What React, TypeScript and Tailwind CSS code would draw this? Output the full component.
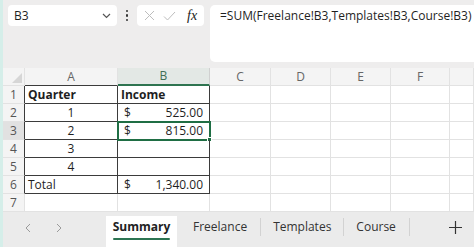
import React from 'react';

const cols = ['A', 'B', 'C', 'D', 'E', 'F', ''];
const colW = ['w-[93px]', 'w-[92px]', 'w-[61px]', 'w-[60px]', 'w-[60px]', 'w-[59px]', 'flex-1'];

type Row = { a?: string; b?: string; bold?: boolean; center?: boolean; money?: boolean };

const rows: Row[] = [
    { a: 'Quarter', b: 'Income', bold: true },
    { a: '1', b: '525.00', center: true, money: true },
    { a: '2', b: '815.00', center: true, money: true },
    { a: '3', center: true },
    { a: '4', center: true },
    { a: 'Total', b: '1,340.00', money: true },
    {},
];

const Cell: React.FC<{ w: string; dark?: boolean; children?: React.ReactNode; className?: string }> = ({ w, dark, children, className }) => (
    <div
        className={`${w} h-full shrink-0 border-r border-b flex items-center ${dark ? 'border-[#3b3b3b]' : 'border-[#e2e2e2]'} ${className ?? ''}`}
    >
        {children}
    </div>
);

export default function App() {
    return (
        <div
            className="w-[474px] h-[247px] overflow-hidden bg-[#eeeded] border-l-[3px] border-[#d5eee9] text-[12px] text-[#1f1f1f] flex flex-col"
            style={{ fontFamily: '"Open Sans", "Noto Sans", sans-serif' }}
        >
            {/* formula bar */}
            <div className="h-[68px] shrink-0 flex items-start pt-[5px] pl-[5px]">
                <div className="w-[109px] h-[21px] bg-white rounded-[4px] flex items-center justify-between pl-[6px] pr-[6px]">
                    <span className="text-[12px]">B3</span>
                    <svg width="9" height="6" viewBox="0 0 9 6" fill="none" stroke="#555" strokeWidth="1.2">
                        <path d="M1 1l3.5 3.5L8 1" />
                    </svg>
                </div>
                <div className="w-[20px] h-[21px] flex flex-col items-center justify-center gap-[2px]">
                    <div className="w-[2.5px] h-[2.5px] rounded-full bg-[#333]" />
                    <div className="w-[2.5px] h-[2.5px] rounded-full bg-[#333]" />
                    <div className="w-[2.5px] h-[2.5px] rounded-full bg-[#333]" />
                </div>
                <div className="w-[67px] h-[21px] bg-white rounded-[4px] flex items-center pl-[7px] gap-[8px]">
                    <svg width="11" height="11" viewBox="0 0 11 11" fill="none" stroke="#bdbdbd" strokeWidth="1">
                        <path d="M1 1l9 9M10 1l-9 9" />
                    </svg>
                    <svg width="13" height="10" viewBox="0 0 13 10" fill="none" stroke="#bdbdbd" strokeWidth="1">
                        <path d="M1 5.5l3.5 3.5L12 1" />
                    </svg>
                    <span className="italic text-[14px] text-[#222] leading-none ml-[3px]" style={{ fontFamily: '"Liberation Serif", serif' }}>
                        fx
                    </span>
                </div>
                <div className="flex-1 h-[57px] bg-white rounded-l-[5px] ml-[6px] pl-[10px] pt-[2px]">
                    <span className="text-[12px] whitespace-nowrap">=SUM(Freelance!B3,Templates!B3,Course!B3)</span>
                </div>
            </div>

            {/* column headers */}
            <div className="h-[18px] shrink-0 flex bg-[#f4f4f4] text-[#666] text-[12px]">
                <div className="w-[22px] h-full shrink-0 border-r border-b border-[#e2e2e2] flex items-end justify-end pr-[2px] pb-[2px]">
                    <svg width="10" height="10" viewBox="0 0 10 10">
                        <path d="M10 0V10H0Z" fill="#d6d6d6" />
                    </svg>
                </div>
                {cols.map((c, i) => (
                    <div
                        key={i}
                        className={`${colW[i]} h-full shrink-0 border-r flex items-center justify-center ${
                            i === 1
                                ? 'bg-[#e3e8e5] text-[#3f6f55] border-b-2 border-b-[#2e7450] border-r-[#d0d0d0]'
                                : i === 0
                                ? 'border-b border-b-[#3b3b3b] border-r-[#e2e2e2]'
                                : 'border-b border-[#e2e2e2]'
                        }`}
                    >
                        {c}
                    </div>
                ))}
            </div>

            {/* grid rows */}
            <div className="flex-1 bg-white flex flex-col">
                {rows.map((r, ri) => {
                    const inTable = ri < 6;
                    const selected = ri === 2;
                    return (
                        <div key={ri} className="h-[18px] shrink-0 flex">
                            <div
                                className={`w-[22px] h-full shrink-0 border-r border-b flex items-center justify-center text-[#555] ${
                                    selected ? 'bg-[#e1e1e1] border-b-[#e2e2e2]' : 'bg-[#f4f4f4] border-b-[#e2e2e2]'
                                } ${inTable ? 'border-r-[#3b3b3b]' : 'border-r-[#e2e2e2]'}`}
                            >
                                {ri + 1}
                            </div>
                            <Cell w={colW[0]} dark={inTable} className={r.center ? 'justify-center' : 'pl-[3px]'}>
                                <span className={r.bold ? 'font-bold' : ''}>{r.a}</span>
                            </Cell>
                            <Cell
                                w={colW[1]}
                                dark={inTable}
                                className={`relative ${selected ? 'outline-2 outline-[#1f6e44] -outline-offset-1' : ''}`}
                            >
                                {r.money ? (
                                    <div className="w-full flex justify-between pl-[6px] pr-[6px]">
                                        <span>$</span>
                                        <span>{r.b}</span>
                                    </div>
                                ) : (
                                    <span className={`pl-[3px] ${r.bold ? 'font-bold' : ''}`}>{r.b}</span>
                                )}
                                {selected && (
                                    <div className="absolute right-[-3px] bottom-[-3px] w-[5px] h-[5px] bg-[#1f6e44] border border-white" />
                                )}
                            </Cell>
                            {colW.slice(2).map((w, ci) => (
                                <Cell key={ci} w={w} />
                            ))}
                        </div>
                    );
                })}
            </div>

            {/* sheet tabs */}
            <div className="h-[35px] shrink-0 bg-[#ebebeb] flex text-[12px] text-[#333]">
                <div className="w-[103px] flex items-center pl-[22px] gap-[25px] pb-[4px]">
                    <svg width="6" height="10" viewBox="0 0 6 10" fill="none" stroke="#9a9a9a" strokeWidth="1">
                        <path d="M5 1L1 5l4 4" />
                    </svg>
                    <svg width="6" height="10" viewBox="0 0 6 10" fill="none" stroke="#9a9a9a" strokeWidth="1">
                        <path d="M1 1l4 4-4 4" />
                    </svg>
                </div>
                <div className="w-[71px] mt-[4px] bg-white flex flex-col items-center pt-[2px]">
                    <span className="font-bold text-[12px] text-[#222]">Summary</span>
                    <div className="w-[57px] h-[2px] bg-[#2c7452] rounded-full mt-[2px]" />
                </div>
                <div className="flex items-center pb-[5px]">
                    <span className="pl-[16px] pr-[13px]">Freelance</span>
                    <div className="w-px h-[18px] bg-[#d2d2d2]" />
                    <span className="pl-[12px] pr-[12px]">Templates</span>
                    <div className="w-px h-[18px] bg-[#d2d2d2]" />
                    <span className="pl-[12px] pr-[13px]">Course</span>
                    <div className="w-px h-[18px] bg-[#d2d2d2]" />
                </div>
                <div className="flex-1 flex items-center justify-end pr-[12px] pb-[5px]">
                    <svg width="13" height="13" viewBox="0 0 13 13" fill="none" stroke="#333" strokeWidth="1.2">
                        <path d="M6.5 0v13M0 6.5h13" />
                    </svg>
                </div>
            </div>
        </div>
    );
}
